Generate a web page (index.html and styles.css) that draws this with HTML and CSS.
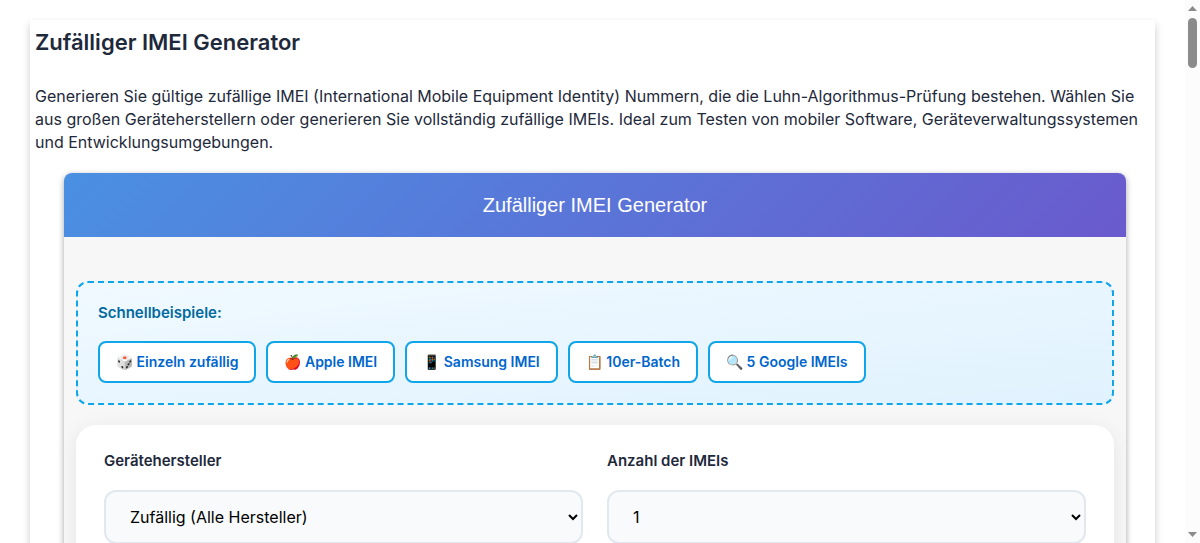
FILE: index.html
```html
<!DOCTYPE html>
<html lang="de">
<head>
<meta charset="utf-8">
<meta name="viewport" content="width=device-width, initial-scale=1">
<title>Zufälliger IMEI Generator</title>
<link rel="stylesheet" href="styles.css">
</head>
<body>
<main class="page">
  <article class="sheet">
    <h1 class="title">Zufälliger IMEI Generator</h1>
    <p class="intro">Generieren Sie gültige zufällige IMEI (International Mobile Equipment Identity) Nummern, die die Luhn-Algorithmus-Prüfung bestehen. Wählen Sie aus großen Geräteherstellern oder generieren Sie vollständig zufällige IMEIs. Ideal zum Testen von mobiler Software, Geräteverwaltungssystemen und Entwicklungsumgebungen.</p>
    <section class="tool">
      <h2 class="tool-header">Zufälliger IMEI Generator</h2>
      <div class="tool-body">
        <div class="examples">
          <h3 class="examples-title">Schnellbeispiele:</h3>
          <div class="examples-list">
            <button class="example" type="button">🎲 Einzeln zufällig</button>
            <button class="example" type="button">🍎 Apple IMEI</button>
            <button class="example" type="button">📱 Samsung IMEI</button>
            <button class="example" type="button">📋 10er-Batch</button>
            <button class="example" type="button">🔍 5 Google IMEIs</button>
          </div>
        </div>
        <form class="form">
          <div class="field">
            <label class="label" for="manufacturer">Gerätehersteller</label>
            <select class="select" id="manufacturer">
              <option>Zufällig (Alle Hersteller)</option>
              <option>Apple</option>
              <option>Samsung</option>
              <option>Google</option>
            </select>
          </div>
          <div class="field">
            <label class="label" for="count">Anzahl der IMEIs</label>
            <select class="select" id="count">
              <option>1</option>
              <option>5</option>
              <option>10</option>
            </select>
          </div>
        </form>
      </div>
    </section>
  </article>
</main>
<div class="scrollbar" aria-hidden="true">
  <svg class="arrow" viewBox="0 0 9 5"><path d="M4.5 0 9 5H0z"/></svg>
  <div class="thumb"></div>
  <svg class="arrow arrow-down" viewBox="0 0 9 5"><path d="M0 0h9L4.500 5z"/></svg>
</div>
</body>
</html>
```
FILE: styles.css
```css
* {
  box-sizing: border-box;
}

body {
  display: flex;
  height: 100vh;
  margin: 0;
  overflow: hidden;
  background: #fff;
  color: #1e293b;
  font-family: Inter, "Liberation Sans", sans-serif;
  font-size: 16px;
  line-height: 23px;
}

.page {
  flex: 1;
  min-width: 0;
  padding: 20px 30px;
  overflow: hidden;
}

.sheet {
  padding: 5px 5px 40px;
  box-shadow: 0 4px 8px rgba(0, 0, 0, 0.2);
}

.title {
  margin: 0;
  font-size: 22px;
  font-weight: 600;
  line-height: 34px;
}

.intro {
  margin: 26px 0 19px;
}

.tool {
  margin: 0 24px 0 29px;
  border-radius: 8px;
  background: #f7f7f7;
  box-shadow: 0 2px 6px rgba(0, 0, 0, 0.35);
}

.tool-header {
  margin: 0;
  padding: 20px;
  border-radius: 8px 8px 0 0;
  background: linear-gradient(135deg, #4a90e2, #6a5acd);
  color: #fff;
  font-family: "Liberation Sans", Arial, sans-serif;
  font-size: 20px;
  font-weight: 400;
  line-height: 24px;
  text-align: center;
}

.tool-body {
  padding: 44px 12px 40px;
}

.examples {
  padding: 20px;
  border: 2px dashed #0ea5e9;
  border-radius: 12px;
  background: linear-gradient(to bottom right, #f0f9ff, #e0f2fe);
}

.examples-title {
  margin: 0 0 18px;
  color: #0369a1;
  font-size: 15px;
  font-weight: 600;
  line-height: 20px;
}

.examples-list {
  display: flex;
  flex-wrap: wrap;
  gap: 10px;
}

.example {
  padding: 8px 16px;
  border: 2px solid #0ea5e9;
  border-radius: 8px;
  background: #fff;
  color: #0066cc;
  font-family: inherit;
  font-size: 14px;
  font-weight: 600;
  line-height: 22px;
}

.form {
  display: grid;
  grid-template-columns: 1fr 1fr;
  gap: 24px;
  margin-top: 20px;
  padding: 24px 28px 28px;
  border-radius: 20px;
  background: #fff;
  box-shadow: 0 4px 20px rgba(0, 0, 0, 0.08);
}

.field {
  display: flex;
  flex-direction: column;
  gap: 18px;
}

.label {
  font-size: 15px;
  font-weight: 600;
}

.select {
  height: 54px;
  padding: 0 0 0 20px;
  border: 2px solid #e2e8f0;
  border-radius: 12px;
  background: #f8fafc;
  color: #000;
  font-family: inherit;
  font-size: 16px;
}

.scrollbar {
  display: flex;
  flex-direction: column;
  align-items: center;
  gap: 7px;
  width: 15px;
  padding: 6px 0;
  background: #fcfcfc;
}

.arrow {
  width: 9px;
  height: 5px;
  fill: #8b8b8b;
}

.arrow-down {
  margin-top: auto;
}

.thumb {
  width: 9px;
  height: 50px;
  border-radius: 5px;
  background: #8b8b8b;
}
```
